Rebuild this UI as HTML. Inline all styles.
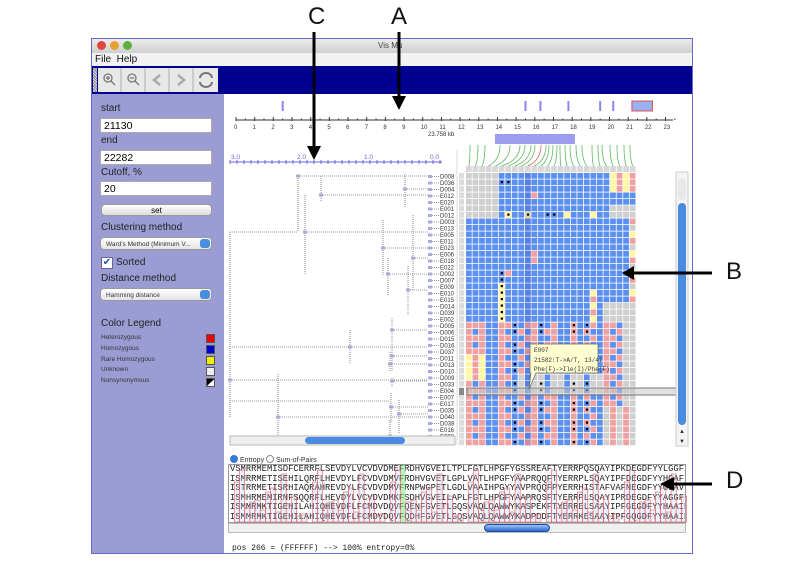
<!DOCTYPE html>
<html><head><meta charset="utf-8">
<style>
body{margin:0;width:785px;height:588px;background:#fff;position:relative;overflow:hidden;font-family:"Liberation Sans",sans-serif}
.abs{position:absolute}
.lbl{font-size:9.5px;color:#222}
.inp{position:absolute;left:100px;width:112px;height:14px;background:#fff;border:1px solid #aaa;font-size:10.5px;line-height:14px;padding-left:3px;box-sizing:border-box;height:15px}
.sel{position:absolute;left:100px;width:112px;height:13px;background:linear-gradient(#fff,#e4e4e4);border:1px solid #999;border-radius:4px;font-size:6.5px;line-height:13px;padding-left:5px;box-sizing:border-box;color:#333}
.sel:after{content:"";position:absolute;right:1px;top:1px;width:10px;height:9px;background:#4a8ee0;border-radius:3px}
.big{font-size:24px;color:#111}
</style></head><body>
<div class="abs" style="left:91px;top:38px;width:602px;height:516px;border:1px solid #6666cc;box-sizing:border-box;background:#fff"></div>
<div class="abs" style="left:92px;top:39px;width:600px;height:14px;background:linear-gradient(#ececec,#cfcfcf)"></div>
<div class="abs" style="left:97px;top:41px;width:9px;height:9px;border-radius:50%;background:#e0443c"></div>
<div class="abs" style="left:110px;top:41px;width:9px;height:9px;border-radius:50%;background:#e8a030"></div>
<div class="abs" style="left:123px;top:41px;width:9px;height:9px;border-radius:50%;background:#5cb040"></div>
<div class="abs" style="left:378px;top:41px;font-size:8px;color:#444">Vis Mu</div>
<div class="abs" style="left:92px;top:53px;width:600px;height:13px;background:#f2f2f2"></div>
<div class="abs" style="left:95px;top:54px;font-size:10px;color:#111">File&nbsp; Help</div>
<div class="abs" style="left:92px;top:66px;width:600px;height:28px;background:#010190"></div>
<div class="abs" style="left:93px;top:68px;width:4px;height:24px;background:repeating-linear-gradient(45deg,#888 0 1px,#ddd 1px 2px)"></div>
<div class="abs" style="left:98px;top:68px;width:120px;height:24px;background:#e8e8e8"></div>
<svg class="abs" style="left:98px;top:68px" width="120" height="24">
<g fill="none" stroke="#777" stroke-width="1.3">
<line x1="23" y1="0" x2="23" y2="24" stroke="#bbb"/><line x1="47" y1="0" x2="47" y2="24" stroke="#bbb"/><line x1="71" y1="0" x2="71" y2="24" stroke="#bbb"/><line x1="95" y1="0" x2="95" y2="24" stroke="#bbb"/>
<circle cx="10" cy="10" r="4"/><line x1="13" y1="13" x2="17" y2="17"/><line x1="8" y1="10" x2="12" y2="10"/><line x1="10" y1="8" x2="10" y2="12"/>
<circle cx="34" cy="10" r="4"/><line x1="37" y1="13" x2="41" y2="17"/><line x1="32" y1="10" x2="36" y2="10"/>
<path d="M62 7 L56 12 L62 17" stroke-width="2.5" stroke="#aaa"/>
<path d="M80 7 L86 12 L80 17" stroke-width="2.5" stroke="#aaa"/>
<path d="M102 10 a6 5 0 0 1 12 0 M114 14 a6 5 0 0 1 -12 0" stroke-width="2"/>
</g></svg>
<div class="abs" style="left:92px;top:94px;width:130px;height:459px;background:#9c9cd4"></div>
<div class="abs lbl" style="left:101px;top:103px;font-size:10px">start</div>
<div class="inp" style="top:118px">21130</div>
<div class="abs lbl" style="left:101px;top:135px;font-size:10px">end</div>
<div class="inp" style="top:150px">22282</div>
<div class="abs lbl" style="left:101px;top:167px;font-size:10px">Cutoff, %</div>
<div class="inp" style="top:181px">20</div>
<div class="abs" style="left:101px;top:204px;width:111px;height:12px;background:linear-gradient(#fff,#ddd);border:1px solid #999;border-radius:4px;font-size:8px;text-align:center;line-height:12px;box-sizing:border-box">set</div>
<div class="abs lbl" style="left:101px;top:222px;font-size:10px">Clustering method</div>
<div class="sel" style="top:237px">Ward's Method (Minimum V...</div>
<div class="abs" style="left:101px;top:257px;width:10px;height:10px;background:#fff;border:1px solid #669;font-size:10px;line-height:9px;color:#1a50c0;text-align:center">✔</div>
<div class="abs lbl" style="left:116px;top:257px;font-size:10px">Sorted</div>
<div class="abs lbl" style="left:101px;top:273px;font-size:10px">Distance method</div>
<div class="sel" style="top:288px">Hamming distance</div>
<div class="abs lbl" style="left:101px;top:318px;font-size:10px">Color Legend</div>
<div class="abs" style="left:101px;top:333px;font-size:6.5px;line-height:10.8px;color:#333">Heterozygous<br>Homozygous<br>Rare Homozygous<br>Unknown<br>Nonsynonymous</div>
<div class="abs" style="left:206px;top:334px;width:7px;height:7px;background:#e00;border:1px solid #555"></div>
<div class="abs" style="left:206px;top:345px;width:7px;height:7px;background:#00c;border:1px solid #555"></div>
<div class="abs" style="left:206px;top:356px;width:7px;height:7px;background:#ee0;border:1px solid #555"></div>
<div class="abs" style="left:206px;top:367px;width:7px;height:7px;background:#eee;border:1px solid #555"></div>
<div class="abs" style="left:206px;top:378px;width:7px;height:7px;background:linear-gradient(135deg,#000 50%,#fff 50%);border:1px solid #555"></div>
<svg id="m" class="abs" style="left:0;top:0" width="785" height="588" font-family="Liberation Sans,sans-serif"></svg>
<div class="abs" style="left:230px;top:455px;font-size:7px;color:#333"><span style="display:inline-block;width:8px;height:8px;border-radius:50%;background:#3a7ad8;vertical-align:-1px"></span> Entropy <span style="display:inline-block;width:8px;height:8px;border-radius:50%;border:1px solid #888;box-sizing:border-box;vertical-align:-1px"></span> Sum-of-Pairs</div>
<div class="abs" style="left:228px;top:464px;width:458px;height:59px;border:1px solid #999;box-sizing:border-box;overflow:hidden">
<div id="seq" style="font-family:'Liberation Mono',monospace;font-size:8.8px;line-height:9.6px;color:#222;white-space:pre;padding-left:1px;position:relative;z-index:1">VSMRRMEMISDFCERRFLSEVDYLVCVDVDMEFRDHVGVEILTPLFGTLHPGFYGSSREAFTYERRPQSQAYIPKDEGDFYYLGGFI
ISMRRMETISEHILQRFLHEVDYLFCVDVDMVFRDHVGVETLGPLVATLHPGFYAAPRQQFTYERRPLSQAYIPFDEGDFYYHGAFI
ISTRRMETISRHIAQRAHREVDYLFCVDVDMVFRNPWGPETLGDLVAAIHPGYYAVPRQQFPYERRHISTAFVAFNEGDFYYGGAVI
ISMHRMEMIRNFSQQRFLHEVDYLVCVDVDMKFSDHVGVEILAPLFGTLHPGFYAAPRQSFTYERRPLSQAYIPRDEGDFYYAGGFI
ISMMRMKTIGEHILAHIQHEVDFLFCMDVDQVFQENFGVETLGQSVAQLQAWWYKASPEKFTYERRELSAAYIPFGEGDFYYHAAID
ISMMRMKTIGEHILAHIQHEVDFLFCMDVDQVFQDHFGVETLGQSVAQLQAWWYKADPDDFTYERRKESAAYIPFGQGDFYYHAAID</div>
</div>
<svg id="ov" class="abs" style="left:0;top:0;z-index:2" width="785" height="588"></svg>
<div class="abs" style="left:228px;top:523px;width:458px;height:10px;background:#f0f0f0;border:1px solid #bbb;box-sizing:border-box"></div>
<div class="abs" style="left:484px;top:524px;width:66px;height:8px;border-radius:4px;background:linear-gradient(#9cc4f4,#2a6ad0);border:1px solid #1a4aa0;box-sizing:border-box"></div>
<div class="abs" style="left:232px;top:544px;font-family:'Liberation Mono',monospace;font-size:8px;color:#222">pos 266 = (FFFFFF) --&gt; 100% entropy=0%</div>
<div class="abs big" style="left:308px;top:3px">C</div>
<div class="abs big" style="left:391px;top:3px">A</div>
<div class="abs big" style="left:726px;top:258px">B</div>
<div class="abs big" style="left:726px;top:467px">D</div>
<svg class="abs" style="left:0;top:0;z-index:3" width="785" height="588">
<g stroke="#000" stroke-width="3"><line x1="314" y1="32" x2="314" y2="148"/><line x1="399" y1="32" x2="399" y2="98"/><line x1="712" y1="273" x2="632" y2="273"/><line x1="712" y1="484" x2="672" y2="484"/></g>
<g fill="#000"><path d="M307 146 L321 146 L314 160Z"/><path d="M392 96 L406 96 L399 110Z"/><path d="M634 266 L634 280 L622 273Z"/><path d="M674 477 L674 491 L660 484Z"/></g>
</svg>
<script>
var s=document.getElementById('m'),h='';
function r(x,y,w,hh,f,ex){h+='<rect x="'+x+'" y="'+y+'" width="'+w+'" height="'+hh+'" fill="'+f+'" '+(ex||'')+'/>';}
function l(a,b,c,d,st,ex){h+='<line x1="'+a+'" y1="'+b+'" x2="'+c+'" y2="'+d+'" stroke="'+st+'" '+(ex||'')+'/>';}
function t(x,y,s_,sz,f,ex){h+='<text x="'+x+'" y="'+y+'" font-size="'+sz+'" fill="'+f+'" '+(ex||'')+'>'+s_+'</text>';}
r(222,94,2,459,'#9c9cd4');
var x0=236,x1=673,sc=(x1-x0)/23.4;
l(x0,120,x1,120,'#333');
for(var i=0;i<=23;i++){var x=x0+i*sc;l(x,117,x,121,'#333');t(x-2,129,i,6,'#333');l(x+sc/2,118.5,x+sc/2,120,'#333');}
t(428,136,'23.758 kb',6,'#333');
[2.5,15.5,16.3,17.8,19.5,20.2].forEach(function(k){r(x0+k*sc-1,101,2,10,'#8888ee');});
r(x0+21.2*sc,101,sc*1.1,10,'#9ab0f0','stroke="#e05050"');
l(230,162,442,162,'#6666dd');
for(var i=0;i<=30;i++){l(230+i*7,160,230+i*7,164,'#6666dd');}
t(231,159,'3.0',6.5,'#6666dd');t(297,159,'2.0',6.5,'#6666dd');t(364,159,'1.0',6.5,'#6666dd');t(430,159,'0.0',6.5,'#6666dd');
var names='D008 D036 D004 E012 E020 E001 D012 D003 E013 E005 E011 E023 E006 E018 E022 D002 D007 E009 E010 E015 D014 D039 E002 D005 D006 D015 D016 D037 D011 D013 D010 D009 D033 E004 E007 E017 D035 D040 D038 E016 E008 E010'.split(' ');
var y0=173,rh=6.5,N=names.length;
for(var i=0;i<N;i++){var y=y0+i*rh+3.5;t(440,y+2,names[i],6,'#333');l(428,y,439,y,'#999','stroke-dasharray="1,1"');r(428,y-1.5,4,3,'#aaaadd');}
var nodes=[[298,176,'v',176,232],[321,195,'v',176,202],[305,232,'v',195,274],[388,274,'v',258,296],[413,258,'v',215,290],[405,189,'v',174,207],[408,290,'v',266,315],[383,248,'v',220,275],[350,347,'v',330,364],[392,330,'v',318,346],[390,364,'v',352,372],[392,356,'v',346,372],[392,381,'v',378,387],[391,407,'v',393,422],[399,414,'v',400,433],[390,436,'v',420,445],[278,417,'v',374,445],[230,380,'v',232,417]];
nodes.forEach(function(n){l(n[0],n[3],n[0],n[4],'#888','stroke-dasharray="1,1"');l(n[0],n[1],428,n[1],'#999','stroke-dasharray="1,1"');r(n[0]-2,n[1]-1.5,4,3,'#aaaadd');});
l(230,232,298,232,'#999','stroke-dasharray="1,1"');l(230,347,350,347,'#999','stroke-dasharray="1,1"');l(230,401,390,401,'#999','stroke-dasharray="1,1"');
r(230,436,225,9,'#eee','stroke="#bbb"');r(305,437,100,7,'#4a8ae0','rx="3.5"');
l(457,150,457,445,'#ddd');
r(495,134,80,10,'#9c9cf0');
var cx0=466,cw=6.55,C=26;
for(var j=0;j<C;j++){var bx=cx0+j*cw+3,tx=[470,478,485,500,510,520,525,531,535,541,546,549,553,557,560,565,570,576,582,592,598,602,610,617,624,630][j];var col=(j==9)?'#e06060':'#60b860';h+='<path d="M'+tx+' 145 Q'+tx+' 160 '+bx+' 166 L'+bx+' 171" fill="none" stroke="'+col+'" stroke-width="0.8"/>';}
var G='#cfcfcf',B='#5b8ff0',P='#f0a0a0',Y='#fff8a0';
r(460,166,178,280,'#fff');
for(var j=0;j<C;j++)r(cx0+j*cw,166,cw-0.8,6,'#d8d8d8');
var colpat=[P,P,P,B,B,P,P,B,B,P,P,B,B,P,B,B,P,B,B,P,B,P,P,B,G,G];
var colpat2=[P,B,P,B,B,P,B,B,P,B,P,B,P,P,B,B,P,B,P,B,B,P,B,P,G,G];
for(var i=0;i<N;i++){var y=y0+i*rh;r(459,y,5,rh-0.8,'#ddd');
 for(var j=0;j<C;j++){var c=B;
  if(i<7){c=(j<5)?G:B;if(j>=22&&i<3)c=(j%2?P:Y);if(i==3&&j==10)c=P;if(i==6&&(j==6||j==9||j==15||j==19))c=Y;if(i>4&&j>21)c=G;}
  else if(i<23){c=B;if(j==25)c=(i%3==0?Y:(i%3==1?P:G));if((i==12||i==13)&&j==10)c=P;if(i>=17&&j==5)c=Y;if(i>=18&&(j==19))c=(i%2?P:Y);if(i>=20&&j>=21)c=G;if(i==15&&j==6)c=P;}
  else {c=(i%2?colpat:colpat2)[j];if(i>=28&&i<=31&&j<3)c=(j==1?P:Y);if(i>=31&&i<=33&&j>=8&&j<=20)c=(j%3?G:B);if(i>=36&&j>=21)c=(j%2?G:P);}
  r(cx0+j*cw,y,cw-0.8,rh-0.8,c);
  if(i>22&&(j==7||j==11||j==16||j==18)&&(i%3!=1))r(cx0+j*cw+2,y+1.5,2.2,2.2,'#000');
  if(i>=15&&i<23&&j==5)r(cx0+j*cw+2,y+1.5,2.2,2.2,'#000');
  if(i==6&&(j==6||j==9||j==12||j==13))r(cx0+j*cw+2,y+1.5,2.2,2.2,'#000');
  if(i==1&&(j==5||j==6))r(cx0+j*cw+2,y+1.5,2.2,2.2,'#000');
 }}
r(cx0+9*cw,173,cw,273,'rgba(60,60,160,0.18)');
r(467,388,209,7,'rgba(200,200,200,0.55)','stroke="#777"');r(459,388,5,7,'#888');
h+='<path d="M530 344 L598 344 L598 373 L536 373 L529 389 L531 373 L530 373Z" fill="#fefed0" stroke="#666" stroke-width="0.7"/>';
t(534,352,'E007',6,'#333','font-family="Liberation Mono,monospace"');t(534,362,'21582:T-&gt;A/T, 13/47',6,'#333','font-family="Liberation Mono,monospace"');t(534,371,'Phe(F)-&gt;Ile(I)/Phe(F)',6,'#333','font-family="Liberation Mono,monospace"');
r(676,172,12,274,'#f4f4f4','stroke="#ccc"');r(678,203,8,222,'#4a8ae0','rx="4"');r(678,178,8,22,'#e8e8e8','rx="4"');
t(679,433,'▲',6,'#333');t(679,443,'▼',6,'#333');
s.innerHTML=h;
// overlay histogram on sequence
h='';
r(229+33*5.2,465,5,57,'rgba(120,230,120,0.5)');
var bx0=229,bw=5.2;
for(var k=0;k<88;k++){var hv=[0,6,18,10,30,22,14,40,8,26,48,34,12,20,52][(k*7)%15];if(k==33||hv==0)continue;r(bx0+k*bw,522-hv,bw,hv,'rgba(190,190,240,0.25)','stroke="#e06060" stroke-width="0.6"');}
document.getElementById('ov').innerHTML=h;
</script>
</body></html>
